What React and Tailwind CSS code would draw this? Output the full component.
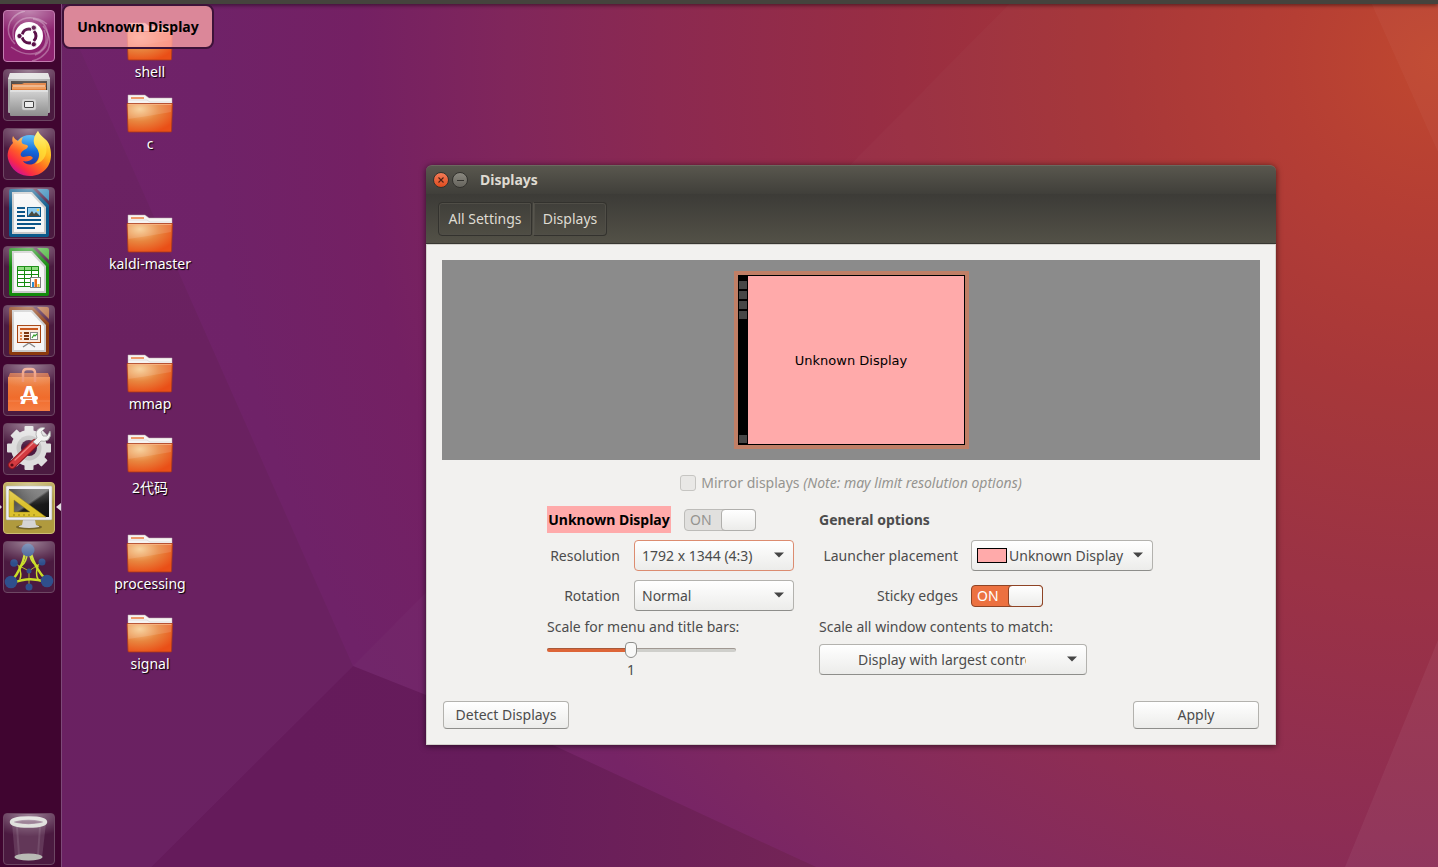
import React, { useState } from "react";

const DESKTOP_FOLDERS = [
  { name: "shell", place: "left-[38px] top-[18px]" },
  { name: "c", place: "left-[38px] top-[90px]" },
  { name: "kaldi-master", place: "left-[38px] top-[210px]" },
  { name: "mmap", place: "left-[38px] top-[350px]" },
  { name: "2代码", place: "left-[38px] top-[430px]", tall: true },
  { name: "processing", place: "left-[38px] top-[530px]" },
  { name: "signal", place: "left-[38px] top-[610px]" },
];

function Wallpaper() {
  return (
    <svg
      className="absolute inset-0 h-full w-full"
      viewBox="0 0 1438 867"
      preserveAspectRatio="none"
      aria-hidden="true"
    >
      <defs>
        <radialGradient id="wall" gradientUnits="userSpaceOnUse" cx="1438" cy="60" r="1500">
          <stop offset="0" stopColor="#bf452b" />
          <stop offset="0.1" stopColor="#b43b30" />
          <stop offset="0.24" stopColor="#a43338" />
          <stop offset="0.38" stopColor="#972d44" />
          <stop offset="0.52" stopColor="#8b2951" />
          <stop offset="0.62" stopColor="#80265b" />
          <stop offset="0.72" stopColor="#742063" />
          <stop offset="0.82" stopColor="#6f2268" />
          <stop offset="1" stopColor="#70236b" />
        </radialGradient>
        <linearGradient id="left-facet" x1="0" y1="0" x2="0" y2="1">
          <stop offset="0" stopColor="#6c2366" />
          <stop offset="0.4" stopColor="#6a2160" />
          <stop offset="1" stopColor="#6a2162" />
        </linearGradient>
        <linearGradient id="bottom-facet" gradientUnits="userSpaceOnUse" x1="300" y1="867" x2="800" y2="867">
          <stop offset="0" stopColor="#651b5b" />
          <stop offset="0.4" stopColor="#661c5b" />
          <stop offset="1" stopColor="#732456" />
        </linearGradient>
      </defs>
      <rect width="1438" height="867" fill="url(#wall)" />
      <path d="M1013 0 L851 164 L353 666 L816 867 H1438 V0Z" fill="#fff" fillOpacity="0.02" />
      <path d="M0 0 H58 L353 666 L151 867 H0Z" fill="url(#left-facet)" />
      <path d="M353 666 L151 867 H816 L555 746Z" fill="url(#bottom-facet)" />
      <path d="M1370 0 L1438 152 V0Z" fill="#fff" fillOpacity="0.03" />
      <path d="M1345 867 L1438 640 V867Z" fill="#fff" fillOpacity="0.05" />
    </svg>
  );
}

function FolderIcon() {
  return (
    <svg width="48" height="40" viewBox="1 0 48 40" aria-hidden="true">
      <defs>
        <radialGradient id="folder" cx="0.28" cy="0.2" r="0.95">
          <stop offset="0" stopColor="#f7cd92" />
          <stop offset="0.45" stopColor="#e8863f" />
          <stop offset="0.9" stopColor="#ea4f17" />
        </radialGradient>
      </defs>
      <path d="M3 1 H20 L24 4 H47 V12 H3Z" fill="#f6f4f2" stroke="#b9a9a9" strokeWidth="0.5" />
      <rect x="6" y="3" width="13" height="2" fill="#ee9a6b" />
      <path d="M3 6 H22 L25 8 H46" fill="none" stroke="#d9d4d4" strokeWidth="0.6" />
      <path d="M2 9.500 H47.500 L46.500 37 Q46.500 38 45.500 38 H4 Q3 38 3 37Z" fill="url(#folder)" stroke="#a8391a" strokeWidth="0.8" />
      <path d="M3 10.500 H46.500 L46 18 Q24 22 3.500 25Z" fill="#fff" fillOpacity="0.13" />
      <path d="M3 10.500 H46.500" stroke="#f9b98a" strokeWidth="0.8" />
    </svg>
  );
}

function UbuntuIcon() {
  return (
    <>
      <g fill="none" stroke="#fff" strokeOpacity="0.3" strokeWidth="1.500">
        <path d="M11 30 Q7 15 20 9 Q32 5 44 14" />
        <path d="M12 34 Q2 24 7 12 Q12 3 22 1" />
        <path d="M41 20 Q47 34 36 42 Q24 48 8 37" />
        <path d="M40 16 Q50 28 45 40 Q39 49 29 51" />
        <path d="M30 9 Q44 11 45 26 Q45 40 32 45" />
      </g>
      <circle cx="26" cy="26" r="14" fill="#fff" />
      <circle cx="26" cy="26" r="7" fill="none" stroke="#5a1048" strokeWidth="3" strokeDasharray="11.660 3" strokeDashoffset="5.830" />
      <g fill="#5a1048" stroke="#fff" strokeWidth="0.8">
        <circle cx="16.500" cy="26" r="2.600" />
        <circle cx="30.800" cy="17.700" r="2.600" />
        <circle cx="30.800" cy="34.300" r="2.600" />
      </g>
    </>
  );
}

function FilesIcon() {
  return (
    <>
      <defs>
        <linearGradient id="cabinet" x1="0" y1="0" x2="0" y2="1">
          <stop offset="0" stopColor="#d4d4d4" />
          <stop offset="1" stopColor="#8d8d8d" />
        </linearGradient>
      </defs>
      <path d="M7 4 H45 L47 10 V43 Q47 44 46 44 H6 Q5 44 5 43 V10Z" fill="#a5a5a5" />
      <path d="M7 4 H45 L47 10 H5Z" fill="#dcdcdc" />
      <rect x="8" y="12" width="36" height="10" fill="#3c3430" />
      <path d="M9 15 H19 L21 14 H43 V22 H9Z" fill="#e07a35" />
      <path d="M10 17 H42" stroke="#fbe5cf" strokeWidth="1" />
      <path d="M9 19 H43" stroke="#f3a15e" strokeWidth="1.500" />
      <rect x="7" y="21" width="38" height="26" rx="1" fill="url(#cabinet)" />
      <path d="M7 22 H45" stroke="#eee" strokeWidth="1" />
      <rect x="19" y="30" width="14" height="11" rx="2" fill="#d6d6d6" stroke="#bbb" strokeWidth="0.5" />
      <rect x="21.500" y="32.500" width="9" height="6" rx="0.5" fill="#ededed" stroke="#444" />
    </>
  );
}

function FirefoxIcon() {
  return (
    <>
      <defs>
        <linearGradient id="fox" x1="0.85" y1="0.05" x2="0.2" y2="0.9">
          <stop offset="0" stopColor="#fff14a" />
          <stop offset="0.35" stopColor="#ffb41e" />
          <stop offset="0.6" stopColor="#ff6a21" />
          <stop offset="0.85" stopColor="#fa2a45" />
          <stop offset="1" stopColor="#d3148c" />
        </linearGradient>
        <linearGradient id="globe" x1="0.6" y1="0" x2="0.4" y2="1">
          <stop offset="0" stopColor="#18a5f5" />
          <stop offset="0.5" stopColor="#1264d8" />
          <stop offset="1" stopColor="#33207c" />
        </linearGradient>
      </defs>
      <circle cx="27" cy="24" r="17" fill="url(#globe)" />
      <path
        d="M10 8 C9 11 9 13 10 15 C4 21 3 29 7 36 C11 44 18 48 27 48 C39 48 48 39 48 27 C48 20 46 14 42 11 C39 8 36 6 35 3 C31 8 29 14 33 19 C38 25 36 31 33 34 C29 38 22 37 20 33 C23 34 27 33 29 31 C31 30 29 28 26 28 C23 28 20 30 18 28 C17 26 18 24 21 22 C23 21 25 20 25 18 C24 16 20 17 19 15 C18 13 19 11 20 9 C17 10 16 12 15 13 C13 12 11 10 10 8Z"
        fill="url(#fox)"
      />
      <path d="M35 3 C31 8 29 14 33 19 C38 25 37 32 32 36 C42 34 46 24 42 14 C40 9 36 7 35 3Z" fill="#ffe83d" fillOpacity="0.65" />
    </>
  );
}

// Sheet of paper with the folded corner shared by the three office icons
function OfficeSheet({ dark, light, children }) {
  return (
    <>
      <path d="M8 2 H30 L46 18 V48 Q46 50 44 50 H8 Q6 50 6 48 V4 Q6 2 8 2Z" fill={dark} />
      <path d="M34 2 H44 Q46 2 46 4 V14Z" fill={light} />
      <path d="M9 5 H29 L43 20 V47 H9Z" fill="#c9c9c9" />
      <path d="M11 7 H28 L41 21 V45 H11Z" fill="#f6f6f6" />
      {children}
    </>
  );
}

function WriterIcon() {
  return (
    <OfficeSheet dark="#0b5a8c" light="#2f86b8">
      <path d="M14 21 H22 M14 25 H22 M14 29 H22 M14 33 H38 M14 37 H38 M14 41 H32" stroke="#0a5487" strokeWidth="2" />
      <rect x="24.500" y="20.500" width="13" height="9" fill="#8ccbf0" stroke="#0a5487" />
      <path d="M25 29 L29 24 L31 27 L33 25 L37 29Z" fill="#4b4b3f" />
      <circle cx="35" cy="23" r="1.300" fill="#f3d34a" />
    </OfficeSheet>
  );
}

function CalcIcon() {
  return (
    <OfficeSheet dark="#138a0c" light="#43b332">
      <rect x="14" y="20" width="22" height="21" fill="#fff" />
      <rect x="14" y="20" width="22" height="4" fill="#8fdc80" />
      <path d="M14.500 20.500 H35.500 V40.500 H14.500Z M14 24.500 H36 M14 28.500 H36 M14 32.500 H36 M14 36.500 H36 M21.500 20 V41 M28.500 20 V41" fill="none" stroke="#158a0f" />
      <rect x="27.500" y="31.500" width="10" height="10" fill="#fff" stroke="#7d7d7d" />
      <rect x="29" y="36" width="2" height="5" fill="#2a8dd0" />
      <rect x="31.500" y="33" width="2.500" height="8" fill="#e46a1c" />
      <rect x="34.500" y="38" width="2" height="3" fill="#eac12a" />
    </OfficeSheet>
  );
}

function ImpressIcon() {
  return (
    <OfficeSheet dark="#8b3a0e" light="#b5683a">
      <rect x="14.500" y="20.500" width="23" height="17" fill="#fbe8dc" stroke="#a5410d" />
      <path d="M17 24 H35" stroke="#c8561c" strokeWidth="2" />
      <path d="M17 28 H19 M17 31 H19 M17 34 H19" stroke="#e08650" strokeWidth="2" />
      <path d="M21 28 H26 M21 31 H26 M21 34 H26" stroke="#7d340d" strokeWidth="2" />
      <rect x="27.500" y="27.500" width="7" height="7" fill="#fff" stroke="#8a8a8a" />
      <path d="M29 33 L31 30 L32 31 L34 29" fill="none" stroke="#35a02c" strokeWidth="1.200" />
      <path d="M26 38 L20 42 M26 38 L32 42" stroke="#8a8a8a" strokeWidth="1.500" />
    </OfficeSheet>
  );
}

function SoftwareIcon() {
  return (
    <>
      <defs>
        <linearGradient id="bag" x1="0" y1="0" x2="0" y2="1">
          <stop offset="0" stopColor="#ec8548" />
          <stop offset="0.6" stopColor="#f06c2c" />
          <stop offset="1" stopColor="#f47c42" />
        </linearGradient>
      </defs>
      <path d="M7 9 H45 L47 14 H5Z" fill="#c05a36" />
      <rect x="5" y="13" width="42" height="34" fill="url(#bag)" />
      <path d="M5 37 H47" stroke="#fff" strokeOpacity="0.15" />
      <path d="M20 18 V9 Q20 5 24 5 H28 Q32 5 32 9 V18" fill="none" stroke="#ec8a66" strokeWidth="2.500" />
      <text x="26" y="40" textAnchor="middle" fontFamily="Open Sans, sans-serif" fontWeight="700" fontSize="25" fill="#fff">A</text>
      <rect x="17" y="32" width="18" height="4" rx="2" fill="#fff" />
      <path d="M20 34 H29" stroke="#f06c2c" strokeWidth="1.500" />
    </>
  );
}

function SettingsIcon() {
  return (
    <>
      <g fill="#dedede">
        <rect x="21.500" y="3" width="9" height="44" rx="1" />
        <rect x="4" y="20.500" width="44" height="9" rx="1" />
        <rect x="21.500" y="3" width="9" height="44" rx="1" transform="rotate(45 26 25)" />
        <rect x="21.500" y="3" width="9" height="44" rx="1" transform="rotate(-45 26 25)" />
        <circle cx="26" cy="25" r="18" />
      </g>
      <circle cx="26" cy="25" r="12.500" fill="#c4c4c4" />
      <circle cx="26" cy="25" r="8" fill="#4b1a40" />
      <path d="M9 42 L32 20" stroke="#8d1520" strokeWidth="8" strokeLinecap="round" />
      <path d="M9 42 L32 20" stroke="#d33a40" strokeWidth="6" strokeLinecap="round" />
      <path d="M12 37 L30 20" stroke="#ee8585" strokeWidth="1.200" strokeLinecap="round" />
      <circle cx="9" cy="42" r="1.600" fill="#5c0d16" />
      <path d="M30 19 L34 15 Q31 8 37 5 Q40 4 42 5 L38 9 L40 13 L44 13 L47 8 Q49 13 45 17 Q41 19 38 18 L34 22Z" fill="#f2f2f0" stroke="#8f8f8f" strokeWidth="0.8" />
    </>
  );
}

function DisplaysIcon() {
  return (
    <>
      <defs>
        <linearGradient id="screen" x1="0" y1="0" x2="1" y2="1">
          <stop offset="0" stopColor="#222" />
          <stop offset="0.5" stopColor="#6a6a6a" />
          <stop offset="0.55" stopColor="#1e1e1e" />
          <stop offset="1" stopColor="#111" />
        </linearGradient>
      </defs>
      <ellipse cx="26" cy="45" rx="13" ry="2.500" fill="#75662a" />
      <path d="M20 38 H32 L33 43 Q37 44 36 45 Q26 47 16 45 Q15 44 19 43Z" fill="#d5d5d5" />
      <rect x="3" y="4" width="46" height="34" rx="1" fill="#ececf0" stroke="#9a9a9a" strokeWidth="0.5" />
      <rect x="6" y="7" width="40" height="28" fill="url(#screen)" />
      <path d="M6 8 L43 35 H6Z M11 18 V30 H27Z" fill="#dcc12d" fillRule="evenodd" stroke="#8f7a10" strokeWidth="0.5" />
      <path d="M11 34 V32 M16 34 V32 M21 34 V32 M26 34 V32 M31 34 V32" stroke="#7c6b10" strokeWidth="0.8" />
    </>
  );
}

function GraphIcon() {
  return (
    <>
      <g fill="none" stroke="#c9dc27" strokeLinecap="round">
        <path d="M22 13 Q19 27 9 40" strokeWidth="2.500" />
        <path d="M28 13 Q32 27 43 39" strokeWidth="2.500" />
        <path d="M10 42 Q26 35 43 41" strokeWidth="2.500" />
        <path d="M11 22 L26 30 L39 21 M26 30 V45" strokeWidth="0.8" />
        <path d="M24 15 Q22 24 16 26 Q19 33 17 38 M27 15 Q29 23 35 25 Q32 33 35 38" strokeWidth="1.500" />
      </g>
      <g fill="#2f4f8c">
        <circle cx="25" cy="9" r="6.500" />
        <circle cx="11" cy="22" r="3.800" />
        <circle cx="39" cy="21" r="3.500" />
        <circle cx="26" cy="30" r="2.500" />
        <circle cx="8" cy="41" r="6.300" />
        <circle cx="44" cy="40" r="6.300" />
        <circle cx="26" cy="46" r="3.500" />
      </g>
    </>
  );
}

function TrashIcon() {
  return (
    <>
      <path d="M9 10 L12 45 Q25 50 39 45 L43 10Z" fill="#fff" fillOpacity="0.13" />
      <path d="M14 14 L16 42 M37 14 L35 42" stroke="#fff" strokeOpacity="0.1" strokeWidth="2" />
      <ellipse cx="25.500" cy="44" rx="14" ry="3.500" fill="#b9bab5" />
      <ellipse cx="25.500" cy="9" rx="17" ry="4" fill="#8e6f88" stroke="#d9d9d5" strokeWidth="3.500" />
      <path d="M14 9 Q25 6 37 9 Q25 12 14 9Z" fill="#7a5572" />
    </>
  );
}

const LAUNCHER_ITEMS = [
  { label: "Search your computer", Icon: UbuntuIcon, tile: "bg-[#8d226f] border-[#c37db0]" },
  { label: "Files", Icon: FilesIcon },
  { label: "Firefox Web Browser", Icon: FirefoxIcon },
  { label: "LibreOffice Writer", Icon: WriterIcon },
  { label: "LibreOffice Calc", Icon: CalcIcon },
  { label: "LibreOffice Impress", Icon: ImpressIcon },
  { label: "Ubuntu Software", Icon: SoftwareIcon },
  { label: "System Settings", Icon: SettingsIcon },
  { label: "Displays", Icon: DisplaysIcon, tile: "bg-[#b09a3e] border-[#cdbd72]", active: true },
  { label: "Graph viewer", Icon: GraphIcon },
];

function LauncherTile({ label, Icon, tile, active }) {
  return (
    <div className="relative flex w-full pl-[3px]">
      <button
        aria-label={label}
        className={`relative h-[52px] w-[52px] overflow-hidden rounded-[4px] border ${tile ?? "border-[#6d4763] bg-[#4b1a40]"}`}
      >
        <svg className="absolute -left-px -top-px" width="52" height="52" viewBox="0 0 52 52" aria-hidden="true">
          <Icon />
        </svg>
        <span className="absolute inset-0 bg-[radial-gradient(ellipse_90%_45%_at_50%_0%,rgba(255,255,255,0.45),rgba(255,255,255,0.12)_70%,transparent)]" />
      </button>
      {active && (
        <>
          <span className="absolute left-0 top-[23px] border-y-2 border-l-2 border-y-transparent border-l-[#d8d0d6]" />
          <span className="absolute right-0 top-[21px] border-y-4 border-r-[5px] border-y-transparent border-r-[#e4dfe3]" />
        </>
      )}
    </div>
  );
}

function Launcher() {
  return (
    <nav className="relative flex w-[62px] shrink-0 flex-col gap-[7px] border-r border-[#7d4a78] bg-[#400530] pb-[2px] pt-[6px]">
      {LAUNCHER_ITEMS.map((item) => (
        <LauncherTile key={item.label} {...item} />
      ))}
      <div className="mt-auto">
        <LauncherTile label="Trash" Icon={TrashIcon} />
      </div>
    </nav>
  );
}

function Caret({ className }) {
  return (
    <svg className={`pointer-events-none absolute ${className}`} width="10" height="6" viewBox="0 0 10 6" aria-hidden="true">
      <path d="M0 0.500 H10 L5 5.500Z" fill="#454545" />
    </svg>
  );
}

const FIELD =
  "h-[31px] w-full appearance-none rounded-[4px] border bg-gradient-to-b from-white to-[#ececea] outline-none";
const BUTTON =
  "h-[28px] w-[126px] rounded-[4px] border border-[#b3b2ae] border-b-[#8e8e8b] bg-gradient-to-b from-white to-[#ececea]";

function Switch({ label, checked, disabled, onChange }) {
  return (
    <label
      className={`relative flex h-[22px] w-[72px] rounded-[4px] border ${
        disabled ? "border-[#bdbcb9] bg-[#e1e0de] text-[#959490]" : "border-[#8f4425] bg-[#ec7140] text-white"
      }`}
    >
      <input
        type="checkbox"
        role="switch"
        aria-label={label}
        className="absolute inset-0 m-0 h-full w-full appearance-none"
        checked={checked}
        disabled={disabled}
        onChange={onChange}
      />
      <span className={`flex-1 pl-[5px] text-sm leading-5 ${checked ? "" : "order-2"}`}>{checked ? "ON" : "OFF"}</span>
      <span
        className={`-my-px h-[22px] w-[35px] rounded-[4px] border bg-gradient-to-b from-white to-[#ececea] ${
          checked ? "-mr-px" : "-ml-px"
        } ${disabled ? "border-[#b0afac]" : "border-[#8f4425]"}`}
      />
    </label>
  );
}

function DisplayPreview() {
  return (
    <div className="flex h-[200px] items-center justify-center bg-[#8b8b8b]">
      <div className="h-[178px] w-[235px] border-4 border-[#c07f66]">
        <div className="flex h-full border border-black bg-[#ffaaaa]">
          <div className="flex w-[9px] flex-col gap-[2px] bg-black pb-px pr-px pt-[5px]">
            <span className="h-2 bg-[#464646]" />
            <span className="h-2 bg-[#464646]" />
            <span className="h-2 bg-[#464646]" />
            <span className="h-2 bg-[#464646]" />
            <span className="mt-auto h-2 bg-[#464646]" />
          </div>
          <div className="-ml-[9px] flex flex-1 items-center justify-center pt-px font-['DejaVu_Sans',sans-serif] text-[13px] text-black">
            Unknown Display
          </div>
        </div>
      </div>
    </div>
  );
}

function DisplaysWindow() {
  const [sticky, setSticky] = useState(true);
  const [scale, setScale] = useState(44);

  return (
    <section className="absolute left-[364px] top-[161px] w-[850px] rounded-t-[6px] text-[#4c4c4c] shadow-[0_1px_6px_rgba(0,0,0,0.6)]">
      <header className="flex h-[29px] items-center rounded-t-[6px] border-t border-[#6b695f] bg-gradient-to-b from-[#59574e] to-[#403f3a] pl-[7px]">
        <button aria-label="Close" className="flex h-4 w-4 items-center justify-center rounded-full border border-[#33322e] bg-gradient-to-b from-[#f37b56] to-[#df4b1b]">
          <svg width="6" height="6" viewBox="0 0 6 6" aria-hidden="true">
            <path d="M0.500 0.500 L5.500 5.500 M5.500 0.500 L0.500 5.500" stroke="#4b2015" strokeWidth="1.100" />
          </svg>
        </button>
        <button aria-label="Minimize" className="ml-[3px] flex h-4 w-4 items-center justify-center rounded-full border border-[#33322e] bg-gradient-to-b from-[#8b8980] to-[#66645d]">
          <span className="h-px w-[7px] bg-[#33322e]" />
        </button>
        <h1 className="ml-3 text-sm font-bold leading-5 text-[#dfdbd2]">Displays</h1>
      </header>

      <div className="flex h-[50px] gap-px border-b border-[#383732] bg-gradient-to-b from-[#3c3b37] to-[#535147] pl-3 pt-2 text-sm text-[#dfdbd2]">
        <button className="h-[34px] w-[94px] rounded-l-[4px] rounded-r-[2px] border border-[#33322e] shadow-[inset_0_0_0_1px_#504e47]">
          All Settings
        </button>
        <button className="h-[34px] w-[74px] rounded-r-[4px] border border-[#33322e] border-l-[#57554d] shadow-[inset_0_0_0_1px_#504e47]">
          Displays
        </button>
      </div>

      <div className="border border-[#d4d2cd] bg-[#f2f1ef] p-[15px] text-sm leading-5">
        <DisplayPreview />

        <label className="mt-[13px] flex items-center justify-center gap-[5px] text-[#959490]">
          <input type="checkbox" disabled className="h-4 w-4 appearance-none rounded-[3px] border border-[#c6c5c2] bg-[#e9e8e6]" />
          <span>
            Mirror displays <i>(Note: may limit resolution options)</i>
          </span>
        </label>

        <div className="mt-[13px] flex justify-center gap-[25px]">
          <div className="w-[247px]">
            <div className="flex h-[27px] items-center gap-[13px]">
              <h2 className="flex h-full w-[124px] items-center justify-center whitespace-nowrap bg-[#ffaaaa] font-bold text-black">
                Unknown Display
              </h2>
              <Switch label="Unknown Display" checked disabled />
            </div>
            <div className="mt-[7px] flex items-center gap-[14px]">
              <label htmlFor="resolution" className="w-[73px] text-right">Resolution</label>
              <div className="relative w-[160px]">
                <select id="resolution" className={`${FIELD} border-[#dc8c70] px-[7px]`}>
                  <option>1792 x 1344 (4:3)</option>
                </select>
                <Caret className="right-[10px] top-3" />
              </div>
            </div>
            <div className="mt-[9px] flex items-center gap-[14px]">
              <label htmlFor="rotation" className="w-[73px] text-right">Rotation</label>
              <div className="relative w-[160px]">
                <select id="rotation" className={`${FIELD} border-[#b3b2ae] border-b-[#8e8e8b] px-[7px]`}>
                  <option>Normal</option>
                </select>
                <Caret className="right-[10px] top-3" />
              </div>
            </div>
            <label htmlFor="scale" className="mt-[6px] block">Scale for menu and title bars:</label>
            <input
              id="scale"
              type="range"
              min="0"
              max="100"
              value={scale}
              onChange={(e) => setScale(Number(e.target.value))}
              className="mt-[5px] block h-4 w-[189px] appearance-none bg-transparent [&::-webkit-slider-runnable-track]:h-[4px] [&::-webkit-slider-runnable-track]:rounded-full [&::-webkit-slider-runnable-track]:bg-[linear-gradient(to_right,#dd6537_44%,#cfcfcb_44%)] [&::-webkit-slider-runnable-track]:shadow-[inset_0_1px_0_rgba(90,70,60,0.4)] [&::-webkit-slider-thumb]:-mt-[6px] [&::-webkit-slider-thumb]:h-4 [&::-webkit-slider-thumb]:w-3 [&::-webkit-slider-thumb]:appearance-none [&::-webkit-slider-thumb]:rounded-[4px_4px_6px_6px] [&::-webkit-slider-thumb]:border [&::-webkit-slider-thumb]:border-[#8e8e8b] [&::-webkit-slider-thumb]:bg-[#f8f8f7]"
            />
            <output htmlFor="scale" className="mt-[2px] block w-[168px] text-center">1</output>
          </div>

          <div className="w-[336px]">
            <h2 className="flex h-[27px] items-center font-bold">General options</h2>
            <div className="mt-[7px] flex items-center gap-[13px]">
              <label htmlFor="launcher" className="w-[139px] whitespace-nowrap text-right">Launcher placement</label>
              <div className="relative w-[182px]">
                <select id="launcher" className={`${FIELD} border-[#b3b2ae] border-b-[#8e8e8b] pl-[37px] pr-[23px]`}>
                  <option>Unknown Display</option>
                </select>
                <span className="pointer-events-none absolute left-[6px] top-2 h-[15px] w-[30px] border border-black bg-[#ffaaaa]" />
                <Caret className="right-[10px] top-3" />
              </div>
            </div>
            <div className="mt-[9px] flex h-[31px] items-center gap-[13px]">
              <span className="w-[139px] text-right">Sticky edges</span>
              <Switch label="Sticky edges" checked={sticky} onChange={() => setSticky(!sticky)} />
            </div>
            <label htmlFor="match" className="mt-[6px] block">Scale all window contents to match:</label>
            <div className="relative mt-[7px] w-[268px]">
              <select id="match" className={`${FIELD} border-[#b3b2ae] border-b-[#8e8e8b] pl-[38px] pr-[60px]`}>
                <option>Display with largest controls</option>
              </select>
              <Caret className="right-[10px] top-3" />
            </div>
          </div>
        </div>

        <div className="mt-[21px] flex justify-between px-px">
          <button className={BUTTON}>Detect Displays</button>
          <button className={BUTTON}>Apply</button>
        </div>
      </div>
    </section>
  );
}

export default function App() {
  return (
    <div className="relative flex min-h-screen flex-col overflow-hidden bg-[#6b2161] font-['Noto_Sans','Noto_Sans_CJK_SC',sans-serif]">
      <Wallpaper />
      <div className="relative h-1 bg-[#45433d] shadow-[0_1px_4px_rgba(0,0,0,0.6)]" />
      <div className="relative flex flex-1">
        <Launcher />
        <main className="relative flex-1">
          {DESKTOP_FOLDERS.map(({ name, place, tall }) => (
            <figure key={name} className={`absolute flex w-[100px] flex-col items-center ${place}`}>
              <FolderIcon />
              <figcaption
                className={`whitespace-nowrap text-sm leading-5 text-white [text-shadow:1px_1px_1px_#000] ${tall ? "mt-1" : ""}`}
              >
                {name}
              </figcaption>
            </figure>
          ))}
          <div className="absolute left-0 top-0 flex h-[45px] w-[152px] items-center justify-center rounded-[8px] border-2 border-[#3d1239] bg-[#ffaaaa]/75 text-sm font-bold text-black">
            Unknown Display
          </div>
          <DisplaysWindow />
        </main>
      </div>
    </div>
  );
}
